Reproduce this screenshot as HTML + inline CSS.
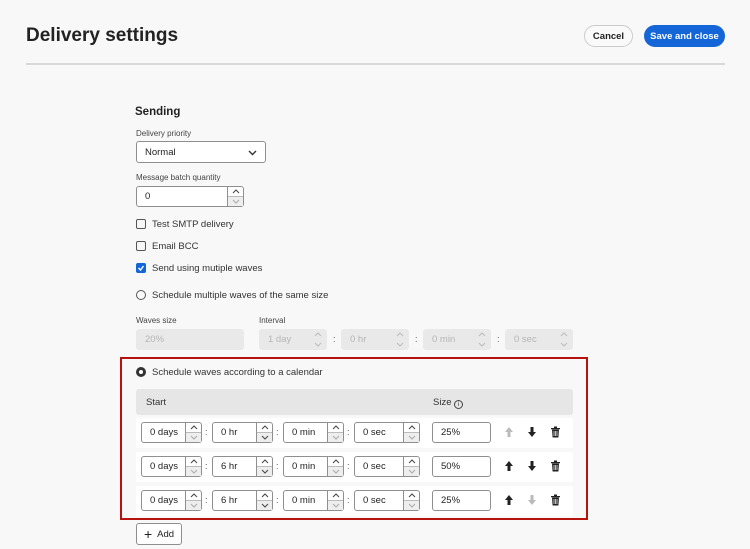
<!DOCTYPE html>
<html><head><style>
*{box-sizing:border-box;margin:0;padding:0}
body{width:750px;height:549px;background:#f8f8f8;font-family:"Liberation Sans",sans-serif;color:#222;position:relative;overflow:hidden}
.a{position:absolute}
.t{font-size:9.5px;color:#333}
.lbl{font-size:8px;color:#444}
.in{position:absolute;background:#fff;border:1px solid #8f8f8f;border-radius:3px;font-size:9.5px;padding-left:8px;display:flex;align-items:center}
.dis{background:#e9e9e9;border-color:#e9e9e9;color:#b5b5b5}
.sp{position:absolute;right:0;top:0;bottom:0;width:16px;border-left:1px solid #8f8f8f;display:flex;flex-direction:column}
.sp div{flex:1;display:flex;align-items:center;justify-content:center}
.sp div+div{background:#eee;border-top:1px solid #bbb}
.dis .sp{border:none}.dis .sp div+div{background:none;border:none}
.cb{position:absolute;width:10px;height:10px;border:1.5px solid #555;border-radius:2px}
.col{position:absolute;font-size:9px;color:#555}
.row{position:absolute;left:136px;width:437px;height:30px;background:#fff}
</style></head><body>
<div class="a" style="left:26px;top:25px;font-size:19px;font-weight:bold;color:#222">Delivery settings</div>
<div class="a" style="left:584px;top:25px;width:49px;height:22px;border:1.5px solid #ccc;border-radius:11px;font-size:9.5px;font-weight:bold;display:flex;align-items:center;justify-content:center;background:#fafafa">Cancel</div>
<div class="a" style="left:644px;top:25px;width:81px;height:22px;background:#1466d8;color:#fff;border-radius:11px;font-size:9.5px;font-weight:bold;display:flex;align-items:center;justify-content:center">Save and close</div>
<div class="a" style="left:26px;top:63px;width:699px;height:2px;background:#d8d8d8"></div>

<div class="a" style="left:135px;top:106px;font-size:11.5px;font-weight:bold">Sending</div>
<div class="a lbl" style="left:136px;top:129px">Delivery priority</div>
<div class="in" style="left:136px;top:141px;width:130px;height:22px">Normal<svg class="a" style="right:8px;top:7px" width="9" height="7"><path d="M1 2l3.5 3.5L8 2" stroke="#333" stroke-width="1.4" fill="none"/></svg></div>
<div class="a lbl" style="left:136px;top:173px">Message batch quantity</div>
<div class="in" style="left:136px;top:186px;width:108px;height:21px">0<div class="sp"><div>UP</div><div>DN</div></div></div>

<div class="cb" style="left:136px;top:219px"></div><div class="a t" style="left:152px;top:219px">Test SMTP delivery</div>
<div class="cb" style="left:136px;top:241px"></div><div class="a t" style="left:152px;top:241px">Email BCC</div>
<div class="cb" style="left:136px;top:263px;background:#1466d8;border-color:#1466d8"><svg class="a" style="left:0;top:0" width="8" height="8"><path d="M1.5 4l2 2 3-4" stroke="#fff" stroke-width="1.4" fill="none"/></svg></div><div class="a t" style="left:152px;top:263px">Send using mutiple waves</div>
<div class="a" style="left:136px;top:290px;width:10px;height:10px;border:1.5px solid #555;border-radius:50%"></div><div class="a t" style="left:152px;top:290px">Schedule multiple waves of the same size</div>

<div class="a lbl" style="left:136px;top:316px">Waves size</div>
<div class="a lbl" style="left:259px;top:316px">Interval</div>
<div class="in dis" style="left:136px;top:329px;width:108px;height:21px">20%</div>
<div class="in dis" style="left:259px;top:329px;width:68px;height:21px">1 day<div class="sp"><div>UP</div><div>DN</div></div></div>
<div class="col" style="left:333px;top:334px">:</div>
<div class="in dis" style="left:341px;top:329px;width:68px;height:21px">0 hr<div class="sp"><div>UP</div><div>DN</div></div></div>
<div class="col" style="left:415px;top:334px">:</div>
<div class="in dis" style="left:423px;top:329px;width:68px;height:21px">0 min<div class="sp"><div>UP</div><div>DN</div></div></div>
<div class="col" style="left:497px;top:334px">:</div>
<div class="in dis" style="left:505px;top:329px;width:68px;height:21px">0 sec<div class="sp"><div>UP</div><div>DN</div></div></div>

<div class="a" style="left:120px;top:357px;width:468px;height:163px;border:2px solid #b8120f"></div>
<div class="a" style="left:136px;top:367px;width:10px;height:10px;border:3px solid #333;border-radius:50%;background:#fff"></div>
<div class="a t" style="left:152px;top:367px">Schedule waves according to a calendar</div>
<div class="a" style="left:136px;top:389px;width:437px;height:26px;background:#e6e6e6;border-radius:3px"></div>
<div class="a t" style="left:146px;top:397px">Start</div>
<div class="a t" style="left:433px;top:397px">Size <span style="display:inline-block;width:9px;height:9px;border:1px solid #444;border-radius:50%;font-size:6px;text-align:center;line-height:8px;vertical-align:-1px">i</span></div>

<div id="rows"></div>
<script>
var d=[["0 hr","25%",0,1],["6 hr","50%",1,1],["6 hr","25%",1,0]];
var h="";
d.forEach(function(r,i){var y=418+i*34,iy=y+4;
h+='<div class="row" style="top:'+y+'px"></div>';
var f=[[141,61,"0 days"],[212,61,r[0]],[283,61,"0 min"],[354,66,"0 sec"]];
f.forEach(function(q,j){h+='<div class="in" style="left:'+q[0]+'px;top:'+iy+'px;width:'+q[1]+'px;height:21px">'+q[2]+'<div class="sp"><div>UP</div><div>'+(j==1?'DK':'DN')+'</div></div></div>';
if(j<3)h+='<div class="col" style="left:'+(q[0]+q[1]+3)+'px;top:'+(iy+5)+'px">:</div>';});
h+='<div class="in" style="left:432px;top:'+iy+'px;width:59px;height:21px">'+r[1]+'</div>';
var up=r[2]?"#222":"#bbb",dn=r[3]?"#222":"#bbb";
h+='<svg class="a" style="left:504px;top:'+(iy+4)+'px" width="10" height="12"><path d="M5 1L1 6h2.5v5h3V6H9z" fill="'+up+'"/></svg>';
h+='<svg class="a" style="left:527px;top:'+(iy+4)+'px" width="10" height="12"><path d="M5 11L1 6h2.5V1h3v5H9z" fill="'+dn+'"/></svg>';
h+='<svg class="a" style="left:550px;top:'+(iy+4)+'px" width="11" height="12"><path d="M1 2h9v1.3H1zM4 .5h3v1.5H4zM2 3.5h7l-.6 8H2.6z" fill="#222"/><path d="M4 5v5M5.5 5v5M7 5v5" stroke="#fff" stroke-width=".7"/></svg>';
});
document.getElementById("rows").innerHTML=h;
var U='<svg width="8" height="5"><path d="M1 4l3-3 3 3" stroke="#444" stroke-width="1" fill="none"/></svg>';
var D='<svg width="8" height="5"><path d="M1 1l3 3 3-3" stroke="#aaa" stroke-width="1" fill="none"/></svg>';
var K='<svg width="8" height="5"><path d="M1 1l3 3 3-3" stroke="#444" stroke-width="1" fill="none"/></svg>';
document.querySelectorAll('.sp div').forEach(function(e){var t=e.textContent;e.innerHTML=t=='UP'?U:t=='DK'?K:D;});
document.querySelectorAll('.dis .sp svg path').forEach(function(p){p.setAttribute('stroke','#bbb')});
</script>
<div class="a" style="left:136px;top:523px;width:46px;height:22px;border:1px solid #8f8f8f;border-radius:3px;background:#fff;font-size:9.5px;display:flex;align-items:center;justify-content:center"><span style="font-size:14px;margin-right:5px;line-height:1">+</span>Add</div>
</body></html>
